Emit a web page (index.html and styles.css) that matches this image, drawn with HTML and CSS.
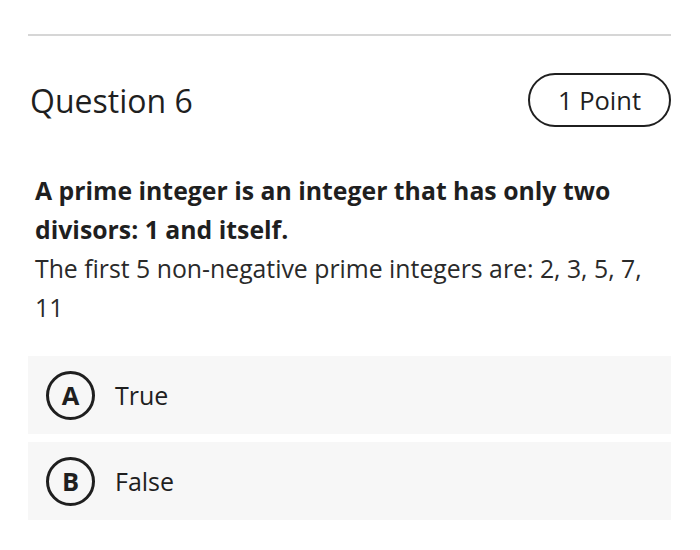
FILE: index.html
```html
<!DOCTYPE html>
<html lang="en">
<head>
<meta charset="utf-8">
<title>Question 6</title>
<link rel="stylesheet" href="styles.css">
</head>
<body>
<div class="page">
  <hr class="rule">
  <div class="header">
    <h2 class="title">Question 6</h2>
    <span class="points">1 Point</span>
  </div>
  <div class="prompt">
    <p class="bold">A prime integer is an integer that has only two divisors: 1 and itself.</p>
    <p class="plain">The first 5 non-negative prime integers are: 2, 3, 5, 7, 11</p>
  </div>
  <div class="options">
    <div class="option"><span class="letter">A</span><span class="label">True</span></div>
    <div class="option"><span class="letter">B</span><span class="label">False</span></div>
  </div>
</div>
</body>
</html>
```
FILE: styles.css
```css
html, body {
  margin: 0;
  padding: 0;
  background: #ffffff;
}
body {
  font-family: "Open Sans", "Noto Sans", sans-serif;
  color: #1f1f1f;
}
.page {
  padding: 34px 29px 0 28px;
}
.rule {
  margin: 0;
  border: 0;
  height: 2px;
  background: #d6d6d6;
}
.header {
  display: flex;
  justify-content: space-between;
  align-items: center;
  margin-top: 37px;
  height: 54px;
}
.title {
  margin: 0 0 0 2px;
  font-size: 32px;
  font-weight: 400;
  line-height: 43px;
  color: #1f1f1f;
}
.points {
  box-sizing: border-box;
  height: 54px;
  display: flex;
  align-items: center;
  padding: 0 28px 0 28px;
  border: 2px solid #1f1f1f;
  border-radius: 27px;
  font-size: 25.5px;
  color: #1f1f1f;
}
.prompt {
  margin-top: 44px;
  padding-left: 7px;
  width: 622px;
}
.prompt p {
  margin: 0;
  font-size: 24.8px;
  line-height: 39px;
}
.bold {
  font-weight: 700;
  color: #1f1f1f;
}
.plain {
  font-weight: 400;
  color: #2a2a2a;
}
.options {
  margin-top: 29px;
  display: flex;
  flex-direction: column;
  gap: 8px;
}
.option {
  height: 78px;
  background: #f7f7f7;
  display: flex;
  align-items: center;
  padding-left: 18px;
}
.letter {
  box-sizing: border-box;
  width: 49px;
  height: 49px;
  border: 3px solid #1f1f1f;
  border-radius: 50%;
  display: flex;
  align-items: center;
  justify-content: center;
  font-size: 25.5px;
  font-weight: 700;
  color: #1f1f1f;
}
.label {
  margin-left: 20px;
  font-size: 25px;
  color: #1f1f1f;
}
```
